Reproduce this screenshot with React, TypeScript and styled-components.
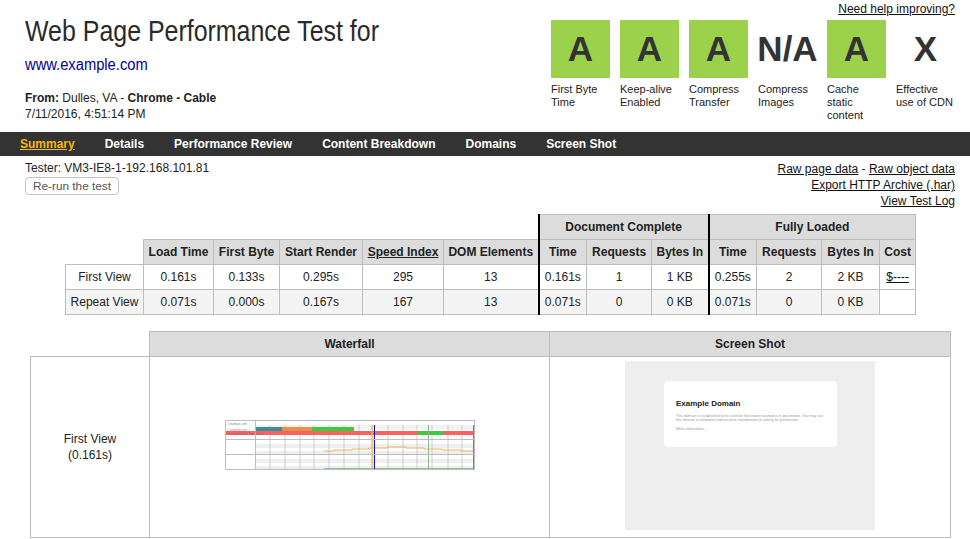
import React from 'react'
import styled, { createGlobalStyle } from 'styled-components'

const GlobalStyle = createGlobalStyle`
    html, body {
        margin: 0;
        padding: 0;
        background: #fff;
        overflow: hidden;
    }
    body {
        font-family: "Liberation Sans", Arial, sans-serif;
        font-size: 12px;
        color: #222;
    }
    a {
        color: #111;
    }
`

const grades = [
    { grade: 'A', label: 'First Byte Time', good: true },
    { grade: 'A', label: 'Keep-alive Enabled', good: true },
    { grade: 'A', label: 'Compress Transfer', good: true },
    { grade: 'N/A', label: 'Compress Images', good: false },
    { grade: 'A', label: 'Cache static content', good: true },
    { grade: 'X', label: 'Effective use of CDN', good: false }
]

const navItems = ['Summary', 'Details', 'Performance Review', 'Content Breakdown', 'Domains', 'Screen Shot']

const rows = [
    { name: 'First View', load: '0.161s', byte: '0.133s', render: '0.295s', speed: '295', dom: '13', dcTime: '0.161s', dcReq: '1', dcBytes: '1 KB', flTime: '0.255s', flReq: '2', flBytes: '2 KB', cost: true },
    { name: 'Repeat View', load: '0.071s', byte: '0.000s', render: '0.167s', speed: '167', dom: '13', dcTime: '0.071s', dcReq: '0', dcBytes: '0 KB', flTime: '0.071s', flReq: '0', flBytes: '0 KB', cost: false }
]

const gridLines = [45, 60, 75, 89, 104, 119, 134, 148, 163, 178, 192, 207, 223, 237]

const WaterfallChart = () => (
    <svg width="250" height="50" viewBox="0 0 250 50">
        <rect x="31" y="5" width="218" height="4" fill="#f3f3f3" />
        <rect x="31" y="24" width="218" height="4" fill="#efefef" />
        <rect x="31" y="31" width="218" height="4" fill="#efefef" />
        <rect x="31" y="39" width="218" height="4" fill="#efefef" />
        <rect x="31" y="46" width="218" height="3" fill="#efefef" />
        {gridLines.map((x) => (
            <line key={x} x1={x} y1="5" x2={x} y2="50" stroke="#cccccc" strokeWidth="1" />
        ))}
        <rect x="1" y="11" width="249" height="4" fill="#fb6161" />
        <rect x="31" y="7" width="26" height="4" fill="#3d8b9e" />
        <rect x="57" y="7" width="30" height="4" fill="#e8914a" />
        <rect x="87" y="7" width="42" height="4" fill="#3ecb3e" />
        <rect x="192" y="11" width="27" height="4" fill="#3ecb3e" />
        <text x="2" y="4.5" fontSize="2.8" fill="#888">/ (example.com)</text>
        <text x="2" y="11" fontSize="2.8" fill="#888">1: example.com - /</text>
        <text x="2" y="14.5" fontSize="2.8" fill="#777">2: example.com - favicon.ico</text>
        <polyline points="99,31 109,31 109,30 127,30 127,29 144,29 144,28 162,28 162,27 181,27 181,28 199,28 199,29 217,29 217,30 236,30 236,31 249,31" fill="none" stroke="#f2ad58" strokeWidth="1" />
        <line x1="99" y1="48.6" x2="249" y2="48.6" stroke="#8fc48f" strokeWidth="1.2" />
        <line x1="147" y1="5" x2="147" y2="50" stroke="#f1b93a" strokeWidth="1.2" />
        <line x1="149.5" y1="5" x2="149.5" y2="50" stroke="#1414dc" strokeWidth="1" />
        <line x1="203.5" y1="5" x2="203.5" y2="50" stroke="#8cb58c" strokeWidth="1" />
        <line x1="248.5" y1="5" x2="248.5" y2="50" stroke="#19c819" strokeWidth="1" />
        <rect x="0.5" y="0.5" width="249" height="49" fill="none" stroke="#bdbdbd" strokeWidth="1" />
        <line x1="30.5" y1="0" x2="30.5" y2="50" stroke="#bdbdbd" strokeWidth="1" />
        <line x1="0" y1="19.5" x2="250" y2="19.5" stroke="#bdbdbd" strokeWidth="1" />
        <line x1="0" y1="34.5" x2="250" y2="34.5" stroke="#bdbdbd" strokeWidth="1" />
    </svg>
)

const App: React.FC = () => {
    return (
        <Page>
            <GlobalStyle />
            <Header>
                <TestInfo>
                    <Title>Web Page Performance Test for</Title>
                    <SiteLink href="#">www.example.com</SiteLink>
                    <FromLine><b>From:</b> Dulles, VA - <b>Chrome - Cable</b></FromLine>
                    <DateLine>7/11/2016, 4:51:14 PM</DateLine>
                </TestInfo>
                <GradesColumn>
                    <HelpLink href="#">Need help improving?</HelpLink>
                    <Grades>
                        {grades.map((item, index) => (
                            <GradeItem key={index}>
                                <GradeBox $good={item.good}>{item.grade}</GradeBox>
                                <GradeLabel>{item.label}</GradeLabel>
                            </GradeItem>
                        ))}
                    </Grades>
                </GradesColumn>
            </Header>
            <Nav>
                {navItems.map((item, index) => (
                    <NavLink key={item} href="#" $active={index === 0}>{item}</NavLink>
                ))}
            </Nav>
            <SubHeader>
                <div>
                    <TesterLine>Tester: VM3-IE8-1-192.168.101.81</TesterLine>
                    <RerunButton>Re-run the test</RerunButton>
                </div>
                <RawLinks>
                    <div><a href="#">Raw page data</a> - <a href="#">Raw object data</a></div>
                    <div><a href="#">Export HTTP Archive (.har)</a></div>
                    <div><a href="#">View Test Log</a></div>
                </RawLinks>
            </SubHeader>
            <MetricsTable>
                <colgroup>
                    <col width="78" /><col width="70" /><col width="66" /><col width="83" /><col width="81" /><col width="95" />
                    <col width="48" /><col width="65" /><col width="57" /><col width="48" /><col width="65" /><col width="58" /><col width="36" />
                </colgroup>
                <thead>
                    <tr>
                        <BlankCell colSpan={6} />
                        <GroupHead colSpan={3} $divider>Document Complete</GroupHead>
                        <GroupHead colSpan={4} $divider>Fully Loaded</GroupHead>
                    </tr>
                    <tr>
                        <BlankCell />
                        <ColHead>Load Time</ColHead>
                        <ColHead>First Byte</ColHead>
                        <ColHead>Start Render</ColHead>
                        <ColHead><u>Speed Index</u></ColHead>
                        <ColHead>DOM Elements</ColHead>
                        <ColHead $divider>Time</ColHead>
                        <ColHead>Requests</ColHead>
                        <ColHead>Bytes In</ColHead>
                        <ColHead $divider>Time</ColHead>
                        <ColHead>Requests</ColHead>
                        <ColHead>Bytes In</ColHead>
                        <ColHead>Cost</ColHead>
                    </tr>
                </thead>
                <tbody>
                    {rows.map((row, index) => (
                        <MetricRow key={row.name} $shaded={index === 1}>
                            <Cell>{row.name}</Cell>
                            <Cell>{row.load}</Cell>
                            <Cell>{row.byte}</Cell>
                            <Cell>{row.render}</Cell>
                            <Cell>{row.speed}</Cell>
                            <Cell>{row.dom}</Cell>
                            <Cell $divider>{row.dcTime}</Cell>
                            <Cell>{row.dcReq}</Cell>
                            <Cell>{row.dcBytes}</Cell>
                            <Cell $divider>{row.flTime}</Cell>
                            <Cell>{row.flReq}</Cell>
                            <Cell>{row.flBytes}</Cell>
                            <BlankCost>{row.cost ? <a href="#">$----</a> : null}</BlankCost>
                        </MetricRow>
                    ))}
                </tbody>
            </MetricsTable>
            <ResultsTable>
                <colgroup>
                    <col width="119" /><col width="400" /><col width="401" />
                </colgroup>
                <thead>
                    <tr>
                        <BlankCell />
                        <ResultHead>Waterfall</ResultHead>
                        <ResultHead>Screen Shot</ResultHead>
                    </tr>
                </thead>
                <tbody>
                    <tr>
                        <ResultCell>First View<br />(0.161s)</ResultCell>
                        <ResultCell><ChartHolder><WaterfallChart /></ChartHolder></ResultCell>
                        <ResultCell>
                            <ShotFrame>
                                <ShotCard>
                                    <ShotTitle>Example Domain</ShotTitle>
                                    <ShotText>This domain is established to be used for illustrative examples in documents. You may use this domain in examples without prior coordination or asking for permission.</ShotText>
                                    <ShotText>More information...</ShotText>
                                </ShotCard>
                            </ShotFrame>
                        </ResultCell>
                    </tr>
                </tbody>
            </ResultsTable>
        </Page>
    )
}

const Page = styled.div`
    width: 970px;
    height: 539px;
    overflow: hidden;
`
const Header = styled.div`
    height: 132px;
    display: flex;
    justify-content: space-between;
    padding: 0 15px 0 25px;
    box-sizing: border-box;
`
const TestInfo = styled.div`
    padding-top: 14px;
    display: flex;
    flex-direction: column;
    align-items: flex-start;
`
const Title = styled.h1`
    margin: 0;
    font-size: 29px;
    line-height: 34px;
    font-weight: normal;
    color: #2a2a2a;
    white-space: nowrap;
    transform: scaleX(0.86);
    transform-origin: left center;
`
const SiteLink = styled.a`
    margin-top: 8px;
    font-size: 16px;
    line-height: 18px;
    color: #00009c;
    text-decoration: none;
    transform: scaleX(0.92);
    transform-origin: left center;
`
const FromLine = styled.div`
    margin-top: 16px;
    line-height: 16px;
`
const DateLine = styled.div`
    line-height: 16px;
`
const GradesColumn = styled.div`
    display: flex;
    flex-direction: column;
    align-items: flex-end;
`
const HelpLink = styled.a`
    margin-top: 2px;
    line-height: 14px;
    height: 18px;
`
const Grades = styled.div`
    width: 404px;
    display: grid;
    grid-template-columns: repeat(6, 59px);
    column-gap: 10px;
`
const GradeItem = styled.div`
    display: flex;
    flex-direction: column;
`
const GradeBox = styled.div<{ $good: boolean }>`
    height: 58px;
    display: flex;
    align-items: center;
    justify-content: center;
    background: ${(props) => (props.$good ? '#9bd14b' : 'transparent')};
    color: #333;
    font-size: 35px;
    font-weight: bold;
    white-space: nowrap;
`
const GradeLabel = styled.div`
    margin-top: 5px;
    font-size: 11px;
    line-height: 13px;
    color: #222;
`
const Nav = styled.nav`
    height: 24px;
    background: #333;
    display: flex;
    align-items: center;
    gap: 30px;
    padding-left: 20px;
`
const NavLink = styled.a<{ $active: boolean }>`
    font-weight: bold;
    font-size: 12px;
    color: ${(props) => (props.$active ? '#f2b90f' : '#fff')};
    text-decoration: ${(props) => (props.$active ? 'underline' : 'none')};
`
const SubHeader = styled.div`
    height: 58px;
    display: flex;
    justify-content: space-between;
    padding: 5px 15px 0 25px;
    box-sizing: border-box;
`
const TesterLine = styled.div`
    line-height: 15px;
`
const RerunButton = styled.button`
    display: block;
    margin-top: 1px;
    width: 94px;
    height: 18px;
    padding: 0;
    background: #fff;
    border: 1px solid #c4c4c4;
    border-radius: 4px;
    font-family: inherit;
    font-size: 11.8px;
    color: #555;
`
const RawLinks = styled.div`
    text-align: right;
    line-height: 16px;
`
const MetricsTable = styled.table`
    margin-left: 65px;
    width: 850px;
    table-layout: fixed;
    border-collapse: collapse;
    text-align: center;
`
const BlankCell = styled.th`
    padding: 0;
    border: none;
`
const GroupHead = styled.th<{ $divider?: boolean }>`
    height: 25px;
    padding: 0;
    box-sizing: border-box;
    background: #dcdcdc;
    border: 1px solid #bdbdbd;
    border-left: ${(props) => (props.$divider ? '2px solid #000' : '1px solid #bdbdbd')};
    font-size: 12px;
    color: #222;
`
const ColHead = styled(GroupHead)`
    white-space: nowrap;
`
const MetricRow = styled.tr<{ $shaded: boolean }>`
    background: ${(props) => (props.$shaded ? '#f4f4f4' : '#fff')};
`
const Cell = styled.td<{ $divider?: boolean }>`
    height: 25px;
    padding: 0;
    box-sizing: border-box;
    border: 1px solid #bdbdbd;
    border-left: ${(props) => (props.$divider ? '2px solid #000' : '1px solid #bdbdbd')};
    white-space: nowrap;
`
const BlankCost = styled(Cell)`
    background: #fff;
`
const ResultsTable = styled.table`
    margin: 16px 0 0 30px;
    width: 920px;
    table-layout: fixed;
    border-collapse: collapse;
    text-align: center;
`
const ResultHead = styled.th`
    height: 25px;
    padding: 0;
    box-sizing: border-box;
    background: #dcdcdc;
    border: 1px solid #bdbdbd;
    font-size: 12px;
    color: #222;
`
const ResultCell = styled.td`
    height: 181px;
    padding: 0;
    box-sizing: border-box;
    border: 1px solid #bdbdbd;
    line-height: 16px;
`
const ChartHolder = styled.div`
    display: flex;
    justify-content: center;
    margin-bottom: 5px;
`
const ShotFrame = styled.div`
    width: 250px;
    height: 169px;
    margin: 0 auto 3px;
    padding: 20px 38px 0 39px;
    box-sizing: border-box;
    background: #eee;
`
const ShotCard = styled.div`
    height: 66px;
    padding: 18px 12px 0;
    box-sizing: border-box;
    background: #fff;
    border-radius: 4px;
    text-align: left;
`
const ShotTitle = styled.div`
    font-size: 8px;
    line-height: 10px;
    font-weight: bold;
    color: #222;
`
const ShotText = styled.div`
    margin-top: 4.5px;
    font-size: 3.7px;
    line-height: 4.5px;
    color: #999;
`

export default App
